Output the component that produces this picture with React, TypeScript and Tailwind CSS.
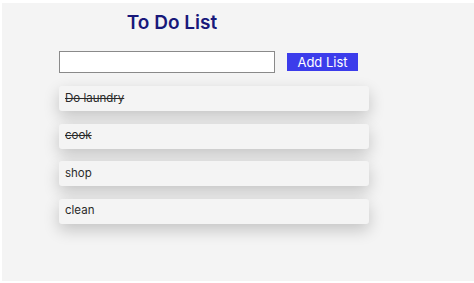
import { useState } from "react";

type Todo = { id: number; text: string; done: boolean };

const initialTodos: Todo[] = [
  { id: 1, text: "Do laundry", done: true },
  { id: 2, text: "cook", done: true },
  { id: 3, text: "shop", done: false },
  { id: 4, text: "clean", done: false },
];

export default function App() {
  const [todos, setTodos] = useState<Todo[]>(initialTodos);
  const [draft, setDraft] = useState("");

  function addTodo() {
    const text = draft.trim();
    if (!text) {
      return;
    }
    setTodos((prev) => [...prev, { id: Date.now(), text, done: false }]);
    setDraft("");
  }

  function toggle(id: number) {
    setTodos((prev) =>
      prev.map((t) => (t.id === id ? { ...t, done: !t.done } : t)),
    );
  }

  return (
    <div className="h-[283px] w-[474px] overflow-hidden bg-white pb-[2px] pl-[2px] pt-[3px] font-[Inter,sans-serif]">
      <div className="h-full w-full bg-[#f4f4f4] pl-[57px] pt-[7px]">
        <h1 className="w-[226px] text-center text-[19px] font-semibold leading-[26px] text-[#18187a]">
          To Do List
        </h1>

        <div className="mt-[15px] flex items-center gap-[12px]">
          <input
            value={draft}
            onChange={(e) => setDraft(e.target.value)}
            className="h-[22px] w-[216px] border border-[#8a8a8a] bg-white px-1 text-[11px] outline-none"
          />
          <button
            onClick={addTodo}
            className="h-[18px] w-[71px] bg-[#3c3ceb] text-[13px] leading-[18px] text-white"
          >
            Add List
          </button>
        </div>

        <ul className="mt-[13px] flex flex-col gap-[12.5px]">
          {todos.map((todo) => (
            <li
              key={todo.id}
              onClick={() => toggle(todo.id)}
              className="flex h-[25px] w-[310px] cursor-pointer items-center rounded-[3px] bg-[#f4f4f4] pl-[6px] text-[11.5px] text-[#2a2a2a] shadow-[0_6px_16px_rgba(0,0,0,0.2)]"
            >
              <span className={todo.done ? "line-through" : ""}>{todo.text}</span>
            </li>
          ))}
        </ul>
      </div>
    </div>
  );
}
